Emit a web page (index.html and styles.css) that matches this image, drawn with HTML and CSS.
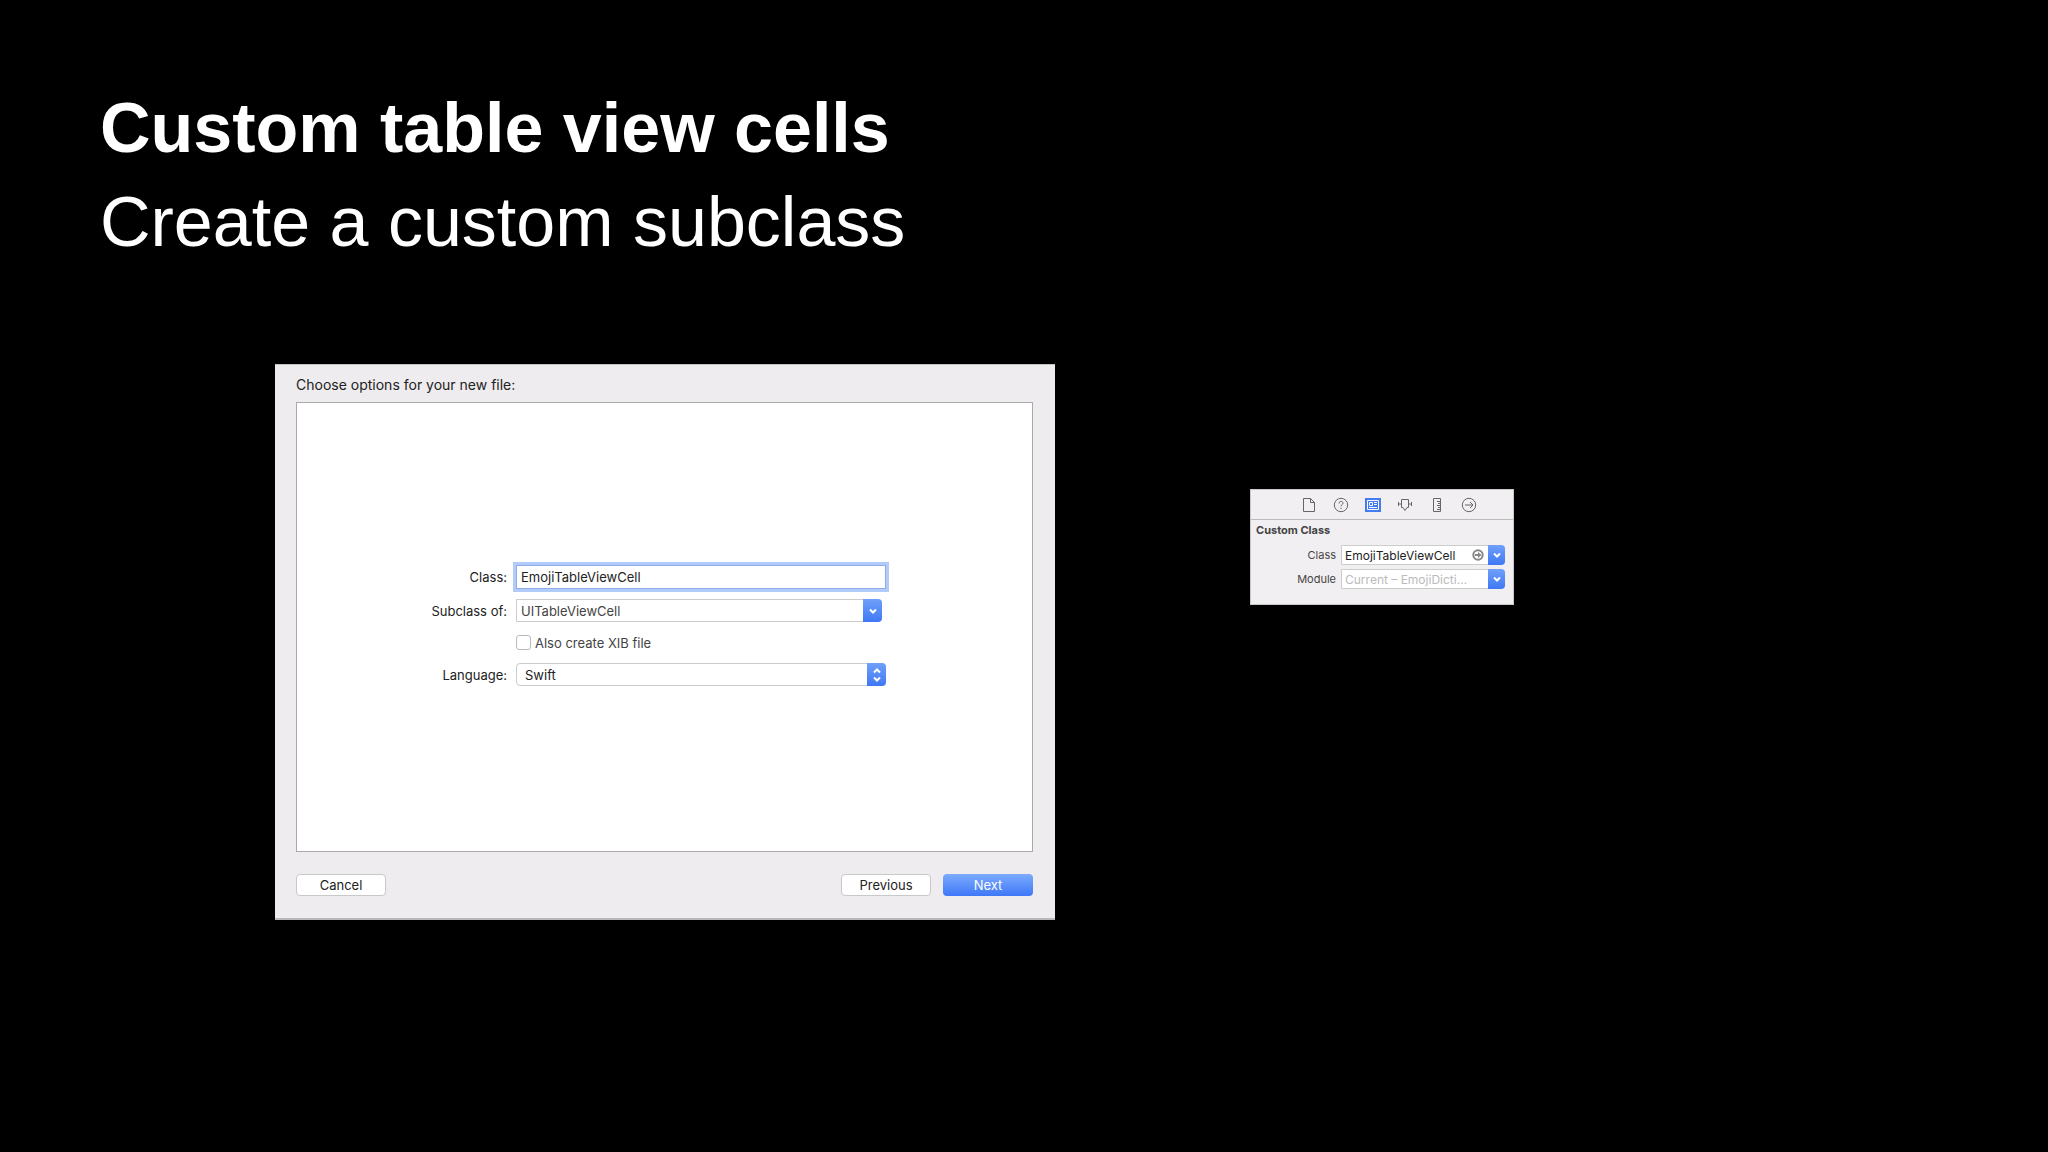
FILE: index.html
```html
<!DOCTYPE html>
<html lang="en">
  <head>
    <meta charset="UTF-8" />
    <meta name="viewport" content="width=device-width, initial-scale=1.0" />
    <title>Custom table view cells</title>
    <link rel="stylesheet" href="styles.css">
  </head>
  <body>
    <header class="slide-header">
      <h1>Custom table view cells</h1>
      <h2>Create a custom subclass</h2>
    </header>
    <main class="slide-body">
      <section class="dialog">
        <p class="dialog-title">Choose options for your new file:</p>
        <form class="options">
          <label for="class-name">Class:</label>
          <input id="class-name" class="field" type="text" value="EmojiTableViewCell" />

          <label for="subclass">Subclass of:</label>
          <div class="combo">
            <input id="subclass" type="text" value="UITableViewCell" />
            <button type="button" aria-label="Show classes">
              <svg width="10" height="8" viewBox="0 0 10 8"><path d="M2 2.5l3 3 3-3" /></svg>
            </button>
          </div>

          <div class="check">
            <input id="xib" type="checkbox" />
            <label for="xib">Also create XIB file</label>
          </div>

          <label for="language">Language:</label>
          <div class="popup">
            <select id="language">
              <option>Swift</option>
            </select>
            <span class="stepper">
              <svg width="10" height="16" viewBox="0 0 10 16"><path d="M2 5.5l3-3 3 3M2 10.5l3 3 3-3" /></svg>
            </span>
          </div>
        </form>
        <div class="buttons">
          <button type="button">Cancel</button>
          <button type="button" class="previous">Previous</button>
          <button type="button" class="next">Next</button>
        </div>
      </section>

      <section class="inspector">
        <nav class="tabs">
          <button type="button" aria-label="File">
            <svg width="16" height="16" viewBox="0 0 16 16"><path d="M2.5 1.5h7l4 4v9h-11zM9.5 1.5v4h4" /></svg>
          </button>
          <button type="button" aria-label="Help">
            <svg width="16" height="16" viewBox="0 0 16 16"><circle cx="8" cy="8" r="6.7" /><path d="M6 6.5c0-2.8 4-2.8 4-.3C10 7.7 8 7.6 8 9.3M8 10.7v1.3" /></svg>
          </button>
          <button type="button" class="selected" aria-label="Identity">
            <svg width="16" height="16" viewBox="0 0 16 16"><rect class="card" width="16" height="14" y="1" /><path d="M2.5 3.5h11v9h-11zM4.5 5.5h3v3h-3zM9 5.5h3M9 7.5h3M4 10.5h8" /></svg>
          </button>
          <button type="button" aria-label="Attributes">
            <svg width="16" height="16" viewBox="0 0 16 16"><path d="M4.5 2.5h7v8H10l-2 3-2-3H4.5zM4.5 7h-3M11.5 7h3M1.500 5v4M14.500 5v4" /></svg>
          </button>
          <button type="button" aria-label="Size">
            <svg width="16" height="16" viewBox="0 0 16 16"><path d="M4.5 1.5h7v13h-7zM11 4.5H8M11 6.5H9M11 8.5H8M11 10.5H9M11 12.5H8" /></svg>
          </button>
          <button type="button" aria-label="Connections">
            <svg width="16" height="16" viewBox="0 0 16 16"><circle cx="8" cy="8" r="6.7" /><path d="M4 8h8M9 5l3 3-3 3" /></svg>
          </button>
        </nav>
        <h3>Custom Class</h3>
        <div class="attributes">
          <label for="custom-class">Class</label>
          <div class="combo">
            <input id="custom-class" type="text" value="EmojiTableViewCell" />
            <a class="jump" href="#" aria-label="Go to class">
              <svg width="12" height="12" viewBox="0 0 12 12"><circle cx="6" cy="6" r="4.7" /><path class="arrow" d="M3 5h3V3l3.500 3L6 9V7H3z" /></svg>
            </a>
            <button type="button" aria-label="Show classes">
              <svg width="10" height="8" viewBox="0 0 10 8"><path d="M2 2.5l3 3 3-3" /></svg>
            </button>
          </div>

          <label for="module">Module</label>
          <div class="combo">
            <input id="module" type="text" placeholder="Current – EmojiDicti…" />
            <button type="button" aria-label="Show modules">
              <svg width="10" height="8" viewBox="0 0 10 8"><path d="M2 2.5l3 3 3-3" /></svg>
            </button>
          </div>
        </div>
      </section>
    </main>
  </body>
</html>
```
FILE: styles.css
```css
* {
  box-sizing: border-box;
}
body {
  margin: 0;
  background: #000;
  color: #222;
  font-family: Inter, sans-serif;
  font-size: 13px;
}
button,
input,
select {
  font: inherit;
  color: inherit;
  margin: 0;
}
svg {
  display: block;
  fill: none;
  stroke: currentColor;
}

/* titles */
.slide-header {
  padding: 81px 100px 0;
  color: #fff;
  font-family: "Liberation Sans", Arial, sans-serif;
}
h1,
h2 {
  margin: 0;
  font-size: 70px;
  line-height: 94px;
}
h2 {
  font-weight: normal;
}
.slide-body {
  display: grid;
  grid-template-columns: 275fr minmax(0, 780fr) 195fr minmax(0, 264fr) 534fr;
  align-items: start;
  padding: 95px 0;
}

/* new file dialog */
.dialog {
  grid-column: 2;
  padding: 12px 22px 22px 21px;
  background: #eeecee;
  border-top: 1px solid #c4c4c4;
  border-bottom: 2px solid #b8b8b8;
}
.dialog-title {
  margin: 0 0 9px;
  font-size: 14px;
  line-height: 16px;
}
.options {
  display: grid;
  grid-template-columns: 210fr 370fr 137fr;
  gap: 10px 9px;
  align-items: center;
  padding: 162px 0 165px;
  background: #fff;
  border: 1px solid #aaa;
}
.options > label {
  grid-column: 1;
  text-align: right;
}
.options > input,
.options > div {
  grid-column: 2;
}
.field {
  height: 24px;
  padding: 0 4px;
  border: 1px solid #8fade8;
  outline: 3px solid #b3cbf8;
}
.combo,
.popup {
  display: flex;
  height: 23px;
  background: #fff;
  border: 1px solid #ccc;
  border-radius: 4px;
}
.combo {
  border-radius: 0 4px 4px 0;
}
.combo input,
.popup select {
  flex: 1;
  min-width: 0;
  padding: 0 4px;
  border: 0;
  background: none;
  appearance: none;
}
.combo button,
.stepper {
  display: flex;
  align-items: center;
  justify-content: center;
  width: 19px;
  margin: -1px;
  padding: 0;
  border: 0;
  border-radius: 0 4px 4px 0;
  color: #fff;
  stroke-width: 2;
  background: linear-gradient(#70a0fa, #3f78f5);
}
.options .combo {
  margin-right: 4px;
  color: #444;
}
.check {
  display: flex;
  align-items: center;
  gap: 4px;
  height: 21px;
  color: #444;
}
.check input {
  width: 15px;
  height: 15px;
  appearance: none;
  border: 1px solid #bbb;
  border-radius: 3px;
}
.popup select {
  padding: 0 8px;
}
.buttons {
  display: flex;
  gap: 12px;
  margin-top: 22px;
}
.buttons button {
  width: 90px;
  height: 22px;
  padding: 0;
  border: 1px solid #c8c8c8;
  border-radius: 4px;
  background: #fff;
}
.buttons .previous {
  margin-left: auto;
}
.buttons .next {
  color: #fff;
  border: 0;
  background: linear-gradient(#7cabfd, #3f78f8);
}

/* identity inspector */
.inspector {
  grid-column: 4;
  margin-top: 125px;
  padding-bottom: 15px;
  background: #f1eff1;
  border: 1px solid #c8c8c8;
  font-size: 12px;
}
.tabs {
  display: flex;
  justify-content: center;
  gap: 16px;
  height: 30px;
  padding-left: 14px;
  border-bottom: 1px solid #bbb;
}
.tabs button {
  padding: 0;
  border: 0;
  background: none;
  color: #666;
}
.tabs .selected {
  color: #fff;
}
.card {
  fill: #437cf3;
  stroke: none;
}
h3 {
  margin: 2px 5px 7px;
  font-size: 11px;
  line-height: 16px;
  color: #444;
}
.attributes {
  display: grid;
  grid-template-columns: 80px minmax(0, 1fr);
  gap: 4px 5px;
  align-items: center;
  padding: 0 8px 0 5px;
}
.attributes label {
  font-size: 11px;
  text-align: right;
  color: #444;
}
.attributes .combo {
  height: 20px;
}
.attributes .combo input {
  padding: 0 3px;
}
.attributes .combo button {
  width: 17px;
}
.jump {
  align-self: center;
  padding-right: 5px;
  color: #888;
  stroke-width: 2;
}
.arrow {
  fill: #888;
  stroke: none;
}
#module::placeholder {
  color: #bbb;
}
```
